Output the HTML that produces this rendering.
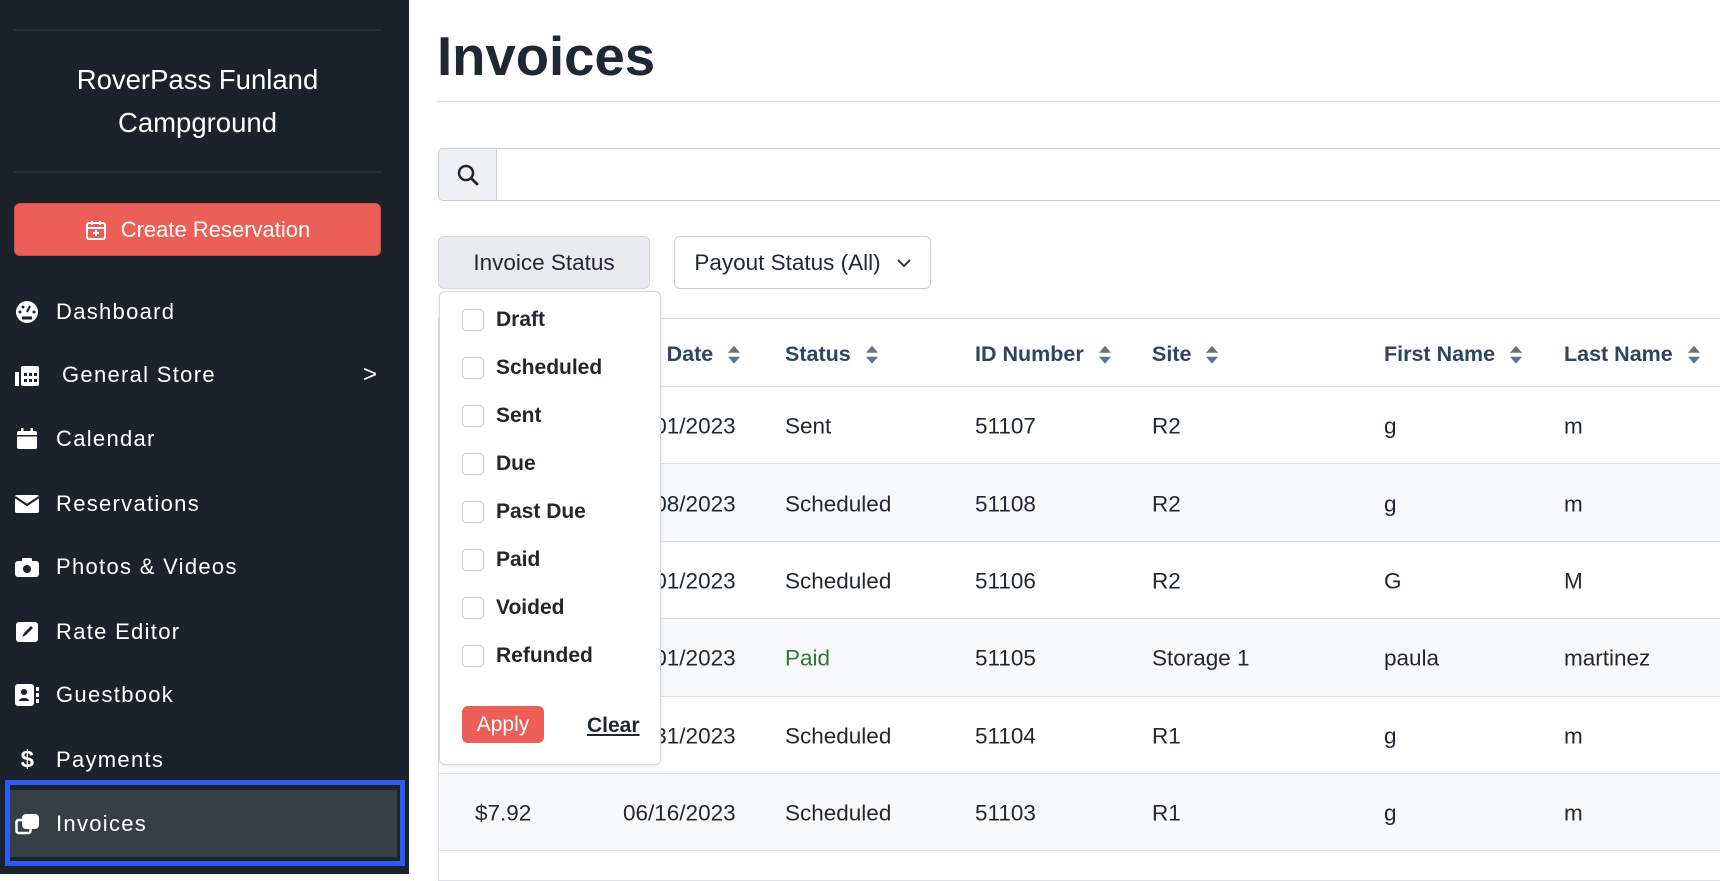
<!DOCTYPE html>
<html><head><meta charset="utf-8"><style>
*{box-sizing:border-box;margin:0;padding:0}
body{width:1720px;height:874px;overflow:hidden;background:#fff;font-family:"Liberation Sans",sans-serif;position:relative}
#sb{position:absolute;left:0;top:0;width:409px;height:874px;background:#1b222c;color:#fff}
.hr{position:absolute;left:14px;width:367px;height:2px;background:#262f3a}
.title{position:absolute;top:58px;left:0;width:395px;text-align:center;font-size:27.5px;line-height:43px}
.cr{position:absolute;left:14px;top:203px;width:367px;height:53px;background:#ec5f57;border-radius:6px;border:1px solid #d94c45;font-size:22px;display:flex;align-items:center;justify-content:center;gap:14px}
.nav{position:absolute;left:0;width:409px;height:40px;display:flex;align-items:center;font-size:22px;letter-spacing:1.3px}
.nav .ic{width:56px;display:flex;justify-content:center;padding-left:0}
.nav .ic svg{margin-left:-3px}
.sel{position:absolute;left:9px;top:790px;width:388px;height:67px;background:#373f46}
.blue{position:absolute;left:5px;top:780px;width:400px;height:86px;border:5px solid #2a5cf5}
h1{position:absolute;left:437px;top:25px;font-size:54.5px;color:#1e2733;font-weight:bold}
.line{position:absolute;left:437px;top:101px;width:1283px;height:1px;background:#dde1e5}
.search{position:absolute;left:438px;top:148px;width:1300px;height:53px;border:1px solid #c9ced4;border-radius:5px}
.search .s{width:58px;height:51px;background:#eef0f3;border-right:1px solid #c9ced4;display:flex;align-items:center;justify-content:center;border-radius:5px 0 0 5px}
.btn{position:absolute;top:236px;height:53px;border-radius:6px;font-size:22.5px;color:#1e2733;display:flex;align-items:center;justify-content:center}
.tbl{position:absolute;left:438px;top:318px;width:1300px;border-top:1px solid #dde1e5;border-left:1px solid #dde1e5}
.row{height:77.4px;border-bottom:1px solid #dde1e5;position:relative;font-size:22.5px;color:#1e2733}
.row.alt{background:#f8f9fb}
.row span{position:absolute;top:50%;transform:translateY(-45%)}
.hd span{font-weight:bold;color:#2c4563;font-size:21.5px}
.sort{display:inline-block;vertical-align:middle;margin-left:14px}
.dd{position:absolute;left:439px;top:291px;width:222px;height:474px;background:#fff;border:1px solid #d4d8dd;border-radius:6px;box-shadow:0 2px 6px rgba(0,0,0,.08)}
.it{position:absolute;left:22px;display:flex;align-items:center;font-size:21px;color:#1e2733;font-weight:bold}
.cb{width:22px;height:22px;border:1.5px solid #c3c8ce;border-radius:4px;margin-right:12px}
</style></head><body>
<div id="sb">
<div class="hr" style="top:29px"></div>
<div class="title">RoverPass Funland<br>Campground</div>
<div class="hr" style="top:171px"></div>
<div class="cr"><svg width="22" height="22" viewBox="0 0 22 22"><rect x="2" y="4" width="18" height="16" rx="2" fill="none" stroke="#fff" stroke-width="2"/><path d="M2 9h18M7 2v4M15 2v4M11 11v6M8 14h6" stroke="#fff" stroke-width="2"/></svg><span>Create Reservation</span></div>
<div class="sel"></div><div class="blue"></div>
<div class="nav" style="top:292px"><div class="ic"><svg width="24" height="22" viewBox="0 0 24 22"><circle cx="12" cy="11" r="11" fill="#fff"/><path d="M12 11l3-6" stroke="#1b222c" stroke-width="2"/><circle cx="5" cy="11" r="1.5" fill="#1b222c"/><circle cx="8" cy="6" r="1.5" fill="#1b222c"/><circle cx="19" cy="11" r="1.5" fill="#1b222c"/><path d="M7 17h10" stroke="#1b222c" stroke-width="3"/></svg></div>Dashboard</div>
<div class="nav" style="top:355px"><div class="ic"><svg width="24" height="22" viewBox="0 0 24 22"><rect x="0" y="8" width="4" height="14" fill="#fff"/><rect x="6" y="2" width="18" height="20" rx="2" fill="#fff"/><g fill="#1b222c"><rect x="9" y="9" width="3" height="3"/><rect x="14" y="9" width="3" height="3"/><rect x="19" y="9" width="3" height="3"/><rect x="9" y="15" width="3" height="3"/><rect x="14" y="15" width="3" height="3"/><rect x="19" y="15" width="3" height="3"/></g></svg></div><span style="margin-left:6px">General Store</span><span style="position:absolute;left:363px;font-size:24px">&gt;</span></div>
<div class="nav" style="top:419px"><div class="ic"><svg width="22" height="22" viewBox="0 0 22 22"><rect x="1" y="3" width="20" height="18" rx="2" fill="#fff"/><rect x="1" y="7" width="20" height="1.5" fill="#1b222c"/><rect x="5" y="0" width="2.5" height="4" fill="#fff"/><rect x="14.5" y="0" width="2.5" height="4" fill="#fff"/></svg></div>Calendar</div>
<div class="nav" style="top:484px"><div class="ic"><svg width="24" height="18" viewBox="0 0 24 18"><rect x="0" y="0" width="24" height="18" rx="2" fill="#fff"/><path d="M0 2l12 8 12-8" stroke="#1b222c" stroke-width="2" fill="none"/></svg></div>Reservations</div>
<div class="nav" style="top:547px"><div class="ic"><svg width="24" height="20" viewBox="0 0 24 20"><rect x="0" y="4" width="24" height="16" rx="3" fill="#fff"/><rect x="7" y="1" width="10" height="5" rx="1" fill="#fff"/><circle cx="12" cy="12" r="4" fill="#1b222c"/></svg></div>Photos &amp; Videos</div>
<div class="nav" style="top:612px"><div class="ic"><svg width="22" height="20" viewBox="0 0 22 20"><rect x="0" y="0" width="22" height="20" rx="3" fill="#fff"/><path d="M6 15l2-4 7-7 2 2-7 7z" fill="#1b222c"/></svg></div>Rate Editor</div>
<div class="nav" style="top:675px"><div class="ic"><svg width="24" height="22" viewBox="0 0 24 22"><rect x="0" y="0" width="19" height="22" rx="3" fill="#fff"/><circle cx="9" cy="8" r="3" fill="#1b222c"/><path d="M4 17c0-4 10-4 10 0z" fill="#1b222c"/><rect x="21" y="3" width="3" height="4" fill="#fff"/><rect x="21" y="9" width="3" height="4" fill="#fff"/><rect x="21" y="15" width="3" height="4" fill="#fff"/></svg></div>Guestbook</div>
<div class="nav" style="top:740px"><div class="ic" style="font-size:24px;font-weight:bold">$</div>Payments</div>
<div class="nav" style="top:804px"><div class="ic"><svg width="24" height="22" viewBox="0 0 24 22"><rect x="1.5" y="7" width="14" height="13" rx="2" fill="none" stroke="#fff" stroke-width="2.5"/><rect x="7" y="1" width="17" height="15" rx="4" fill="#fff"/></svg></div>Invoices</div>
</div>

<h1>Invoices</h1>
<div class="line"></div>
<div class="search"><div class="s"><svg width="22" height="22" viewBox="0 0 22 22"><circle cx="9" cy="9" r="7" fill="none" stroke="#1e2733" stroke-width="2.5"/><path d="M14 14l6 6" stroke="#1e2733" stroke-width="2.8" stroke-linecap="round"/></svg></div></div>
<div class="btn" style="left:438px;width:212px;background:#e9ebee;border:1px solid #d4d8dd">Invoice Status</div>
<div class="btn" style="left:674px;width:257px;border:1px solid #c9ced4;gap:16px"><span>Payout Status (All)</span><svg width="14" height="10" viewBox="0 0 14 10"><path d="M1 2l6 6 6-6" stroke="#1e2733" stroke-width="1.8" fill="none"/></svg></div>

<div class="tbl">
<div class="row hd" style="height:68px"><span style="left:181px">Due Date<svg class="sort" width="14" height="20" viewBox="0 0 14 20"><path d="M7 1l6 7H1zM7 19l6-7H1z" fill="#5f7389"/></svg></span><span style="left:346px">Status<svg class="sort" width="14" height="20" viewBox="0 0 14 20"><path d="M7 1l6 7H1zM7 19l6-7H1z" fill="#5f7389"/></svg></span><span style="left:536px">ID Number<svg class="sort" width="14" height="20" viewBox="0 0 14 20"><path d="M7 1l6 7H1zM7 19l6-7H1z" fill="#5f7389"/></svg></span><span style="left:713px">Site<svg class="sort" width="14" height="20" viewBox="0 0 14 20"><path d="M7 1l6 7H1zM7 19l6-7H1z" fill="#5f7389"/></svg></span><span style="left:945px">First Name<svg class="sort" width="14" height="20" viewBox="0 0 14 20"><path d="M7 1l6 7H1zM7 19l6-7H1z" fill="#5f7389"/></svg></span><span style="left:1125px">Last Name<svg class="sort" width="14" height="20" viewBox="0 0 14 20"><path d="M7 1l6 7H1zM7 19l6-7H1z" fill="#5f7389"/></svg></span></div>
<div class="row"><span style="left:36px">$7.92</span><span style="left:184px">09/01/2023</span><span style="left:346px">Sent</span><span style="left:536px">51107</span><span style="left:713px">R2</span><span style="left:945px">g</span><span style="left:1125px">m</span></div>
<div class="row alt"><span style="left:36px">$7.92</span><span style="left:184px">08/08/2023</span><span style="left:346px">Scheduled</span><span style="left:536px">51108</span><span style="left:713px">R2</span><span style="left:945px">g</span><span style="left:1125px">m</span></div>
<div class="row"><span style="left:36px">$7.92</span><span style="left:184px">08/01/2023</span><span style="left:346px">Scheduled</span><span style="left:536px">51106</span><span style="left:713px">R2</span><span style="left:945px">G</span><span style="left:1125px">M</span></div>
<div class="row alt"><span style="left:36px">$7.92</span><span style="left:184px">08/01/2023</span><span style="left:346px;color:#2f7a2f">Paid</span><span style="left:536px">51105</span><span style="left:713px">Storage 1</span><span style="left:945px">paula</span><span style="left:1125px">martinez</span></div>
<div class="row"><span style="left:36px">$7.92</span><span style="left:184px">07/31/2023</span><span style="left:346px">Scheduled</span><span style="left:536px">51104</span><span style="left:713px">R1</span><span style="left:945px">g</span><span style="left:1125px">m</span></div>
<div class="row alt"><span style="left:36px">$7.92</span><span style="left:184px">06/16/2023</span><span style="left:346px">Scheduled</span><span style="left:536px">51103</span><span style="left:713px">R1</span><span style="left:945px">g</span><span style="left:1125px">m</span></div>
<div class="row" style="height:30px"></div>
</div>

<div class="dd">
<div class="it" style="top:16px"><div class="cb"></div>Draft</div>
<div class="it" style="top:64px"><div class="cb"></div>Scheduled</div>
<div class="it" style="top:112px"><div class="cb"></div>Sent</div>
<div class="it" style="top:160px"><div class="cb"></div>Due</div>
<div class="it" style="top:208px"><div class="cb"></div>Past Due</div>
<div class="it" style="top:256px"><div class="cb"></div>Paid</div>
<div class="it" style="top:304px"><div class="cb"></div>Voided</div>
<div class="it" style="top:352px"><div class="cb"></div>Refunded</div>
<div style="position:absolute;left:22px;top:414px;width:82px;height:37px;background:#ec5f57;border-radius:6px;color:#fff;font-size:21px;display:flex;align-items:center;justify-content:center">Apply</div>
<div style="position:absolute;left:147px;top:422px;font-size:21px;font-weight:bold;text-decoration:underline;color:#1e2733">Clear</div>
</div>
</body></html>
